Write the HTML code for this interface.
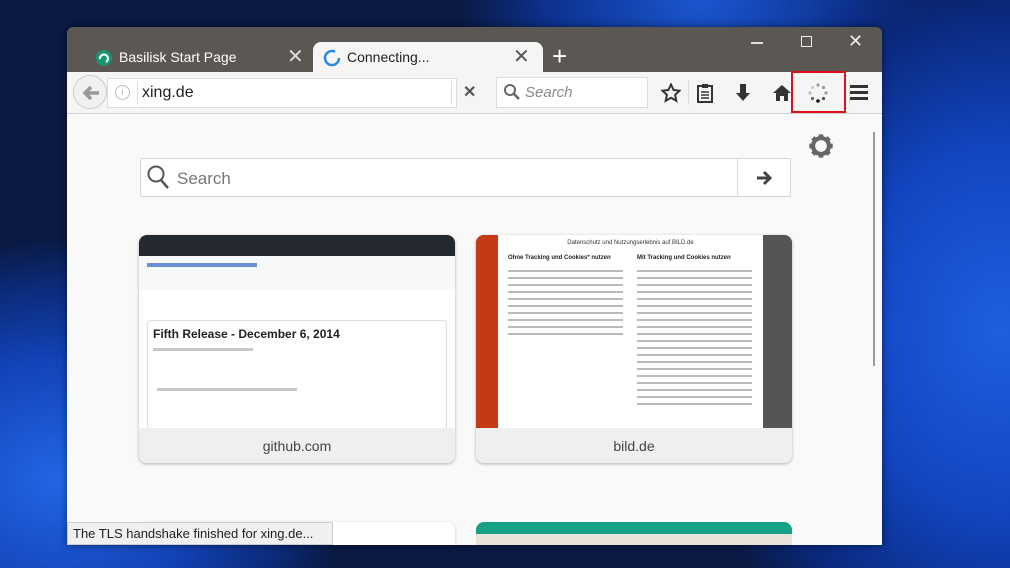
<!DOCTYPE html>
<html><head><meta charset="utf-8"><style>
*{box-sizing:border-box;margin:0;padding:0}
body{width:1010px;height:568px;overflow:hidden;position:relative;font-family:"Liberation Sans",sans-serif;
background:
radial-gradient(ellipse 420px 520px at 1000px 330px,#1d5fe0 0%,#1245c0 35%,#0a2a80 60%,transparent 75%),
radial-gradient(ellipse 360px 300px at 60px 480px,#2266e6 0%,#1343b8 40%,#0b2a78 65%,transparent 80%),
radial-gradient(ellipse 300px 200px at 700px 0px,#1b56d0 0%,#0d3290 50%,transparent 80%),
#0a1a44;}
.win{position:absolute;left:67px;top:27px;width:815px;height:518px;background:#5b5752;border-radius:6px 6px 0 0;overflow:hidden;box-shadow:0 0 8px rgba(0,0,0,.5)}
.tab{position:absolute;top:16px;height:30px;font-size:14px;color:#fff;line-height:28px}
.nav{position:absolute;left:0;top:45px;width:815px;height:42px;background:#f5f5f5;border-bottom:1px solid #d0d0d0}
.content{position:absolute;left:0;top:87px;width:815px;height:431px;background:#f9f9f9}
.tile{position:absolute;width:316px;height:228px;border-radius:8px;background:#ededed;box-shadow:0 1px 3px rgba(0,0,0,.3);overflow:hidden}
.lbl{position:absolute;left:0;bottom:0;width:100%;height:35px;text-align:center;line-height:36px;font-size:14px;color:#444;background:#efefef}
.gl{position:absolute;height:3px;background:#c8c8c8}
</style></head><body>
<div class="win">
  <div class="tab" style="left:28px"><svg width="18" height="18" viewBox="0 0 18 18" style="position:absolute;left:0;top:6px"><circle cx="9" cy="9" r="8" fill="#16956e"/><path d="M5 10a4 4 0 1 1 6 3" stroke="#fff" stroke-width="2.2" fill="none"/></svg><span style="position:absolute;left:24px;white-space:nowrap">Basilisk Start Page</span><span style="position:absolute;left:192px;font-size:20px;color:#ddd">✕</span></div>
  <div style="position:absolute;left:246px;top:15px;width:230px;height:31px;background:#f5f5f5;border-radius:8px 8px 0 0"></div>
  <div class="tab" style="left:256px;color:#222"><svg width="18" height="18" viewBox="0 0 18 18" style="position:absolute;left:0;top:6px"><circle cx="9" cy="9" r="7" stroke="#2b8ae0" stroke-width="2.5" fill="none" stroke-dasharray="36 8"/></svg><span style="position:absolute;left:24px;white-space:nowrap">Connecting...</span><span style="position:absolute;left:190px;font-size:20px;color:#555">✕</span></div>
  <div style="position:absolute;left:485px;top:14px;color:#fff;font-size:26px">+</div>
  <div style="position:absolute;left:684px;top:15px;width:12px;height:2px;background:#ddd"></div>
  <div style="position:absolute;left:734px;top:9px;width:11px;height:11px;border:1.5px solid #eee"></div>
  <div style="position:absolute;left:781px;top:4px;color:#eee;font-size:18px">✕</div>
  <div class="nav">
    <div style="position:absolute;left:40px;top:6px;width:350px;height:30px;background:#fff;border:1px solid #ddd"></div>
    <div style="position:absolute;left:6px;top:3px;width:34px;height:34px;border-radius:50%;border:1px solid #ccc;background:#f1f1f1"></div>
    <svg width="20" height="18" viewBox="0 0 20 18" style="position:absolute;left:14px;top:12px"><path d="M18 9H5M10 3L4 9l6 6" stroke="#999" stroke-width="3.5" fill="none"/></svg>
    <div style="position:absolute;left:48px;top:13px;width:15px;height:15px;border-radius:50%;border:1px solid #bbb;font-size:10px;color:#bbb;text-align:center;line-height:13px">i</div>
    <div style="position:absolute;left:70px;top:9px;width:1px;height:24px;background:#ddd"></div>
    <div style="position:absolute;left:75px;top:12px;font-size:16px;color:#222">xing.de</div>
    <div style="position:absolute;left:384px;top:9px;width:1px;height:24px;background:#ddd"></div>
    <div style="position:absolute;left:396px;top:10px;font-size:16px;color:#555;font-weight:bold">✕</div>
    <div style="position:absolute;left:429px;top:5px;width:152px;height:31px;background:#fff;border:1px solid #ddd"></div>
    <svg width="18" height="18" style="position:absolute;left:436px;top:11px"><circle cx="7" cy="7" r="5" stroke="#666" stroke-width="2" fill="none"/><path d="M11 11l5 5" stroke="#666" stroke-width="2.5"/></svg>
    <div style="position:absolute;left:458px;top:12px;font-size:15px;color:#888;font-style:italic">Search</div>
    <svg width="20" height="20" viewBox="0 0 20 20" style="position:absolute;left:594px;top:11px"><path d="M10 1.5l2.6 5.5 6 .7-4.5 4.1 1.2 6-5.3-3-5.3 3 1.2-6L1.4 7.7l6-.7z" fill="none" stroke="#333" stroke-width="2"/></svg>
    <div style="position:absolute;left:621px;top:9px;width:1px;height:24px;background:#ddd"></div>
    <svg width="18" height="20" viewBox="0 0 18 20" style="position:absolute;left:629px;top:11px"><rect x="2" y="3" width="14" height="16" fill="none" stroke="#333" stroke-width="2"/><rect x="6" y="1" width="6" height="4" fill="#333"/><path d="M5 9h8M5 12h8M5 15h8" stroke="#333" stroke-width="1.5"/></svg>
    <svg width="18" height="20" viewBox="0 0 18 20" style="position:absolute;left:667px;top:11px"><path d="M6 1h6v9h4l-7 8-7-8h4z" fill="#333"/></svg>
    <svg width="18" height="18" viewBox="0 0 18 18" style="position:absolute;left:706px;top:12px"><path d="M9 1L0 9h3v8h4v-5h4v5h4V9h3z" fill="#333"/></svg>
    <div style="position:absolute;left:724px;top:-1px;width:55px;height:42px;border:2.5px solid #e0101a"></div>
    <svg width="22" height="22" viewBox="0 0 22 22" style="position:absolute;left:740px;top:10px"><g fill="#999"><circle cx="11" cy="3" r="1.6"/><circle cx="16.5" cy="5.5" r="1.6"/><circle cx="19" cy="11" r="1.6"/><circle cx="16.5" cy="16.5" r="1.6" fill="#555"/><circle cx="11" cy="19" r="1.8" fill="#111"/><circle cx="5.5" cy="16.5" r="1.6" fill="#666"/><circle cx="3" cy="11" r="1.6" fill="#bbb"/><circle cx="5.5" cy="5.5" r="1.6" fill="#ccc"/></g></svg>
    <div style="position:absolute;left:782px;top:9px;width:1px;height:24px;background:#ddd"></div>
    <div style="position:absolute;left:783px;top:13px;width:18px;height:3px;background:#333;box-shadow:0 6px 0 #333,0 12px 0 #333"></div>
  </div>
  <div class="content">
    <div style="position:absolute;left:806px;top:18px;width:2px;height:234px;background:#999"></div>
    <svg width="28" height="28" viewBox="0 0 30 30" style="position:absolute;left:740px;top:18px"><circle cx="15" cy="15" r="8.5" fill="none" stroke="#666" stroke-width="4.5"/><g stroke="#666" stroke-width="5"><path d="M15 2.5v4M15 23.5v4M2.5 15h4M23.5 15h4M6.2 6.2l2.8 2.8M21 21l2.8 2.8M6.2 23.8l2.8-2.8M21 9l2.8-2.8"/></g></svg>
    <div style="position:absolute;left:73px;top:44px;width:651px;height:39px;background:#fff;border:1px solid #d5d5d5;border-radius:2px"></div>
    <div style="position:absolute;left:670px;top:45px;width:1px;height:37px;background:#ddd"></div>
    <svg width="24" height="26" style="position:absolute;left:80px;top:51px"><circle cx="9" cy="9" r="7.5" stroke="#555" stroke-width="2" fill="none"/><path d="M14 15l7 8" stroke="#555" stroke-width="2.5"/></svg>
    <div style="position:absolute;left:110px;top:55px;font-size:17px;color:#777">Search</div>
    <svg width="20" height="18" viewBox="0 0 20 18" style="position:absolute;left:688px;top:55px"><path d="M2 9h13M9 3l6 6-6 6" stroke="#444" stroke-width="3" fill="none"/></svg>
    <div class="tile" style="left:72px;top:121px">
      <div style="position:absolute;left:0;top:0;width:316px;height:21px;background:#24292f"></div>
      <div style="position:absolute;left:0;top:21px;width:316px;height:172px;background:#fff"></div>
      <div style="position:absolute;left:0;top:21px;width:316px;height:34px;background:#f6f8fa"></div>
      <div style="position:absolute;left:8px;top:28px;width:110px;height:4px;background:#6b8fd4"></div>
      <div style="position:absolute;left:8px;top:85px;width:300px;height:110px;border:1px solid #ddd;border-radius:4px"></div>
      <div style="position:absolute;left:14px;top:92px;font-size:12px;font-weight:bold;color:#222;white-space:nowrap">Fifth Release - December 6, 2014</div>
      <div class="gl" style="left:14px;top:113px;width:100px"></div>
      <div class="gl" style="left:18px;top:153px;width:140px"></div>
      <div class="lbl">github.com</div>
    </div>
    <div class="tile" style="left:409px;top:121px">
      <div style="position:absolute;left:0;top:0;width:316px;height:193px;background:#3a2a20"></div>
      <div style="position:absolute;left:0;top:0;width:22px;height:193px;background:#c43a12"></div>
      <div style="position:absolute;left:22px;top:0;width:265px;height:193px;background:#fff"></div>
      <div style="position:absolute;left:287px;top:0;width:29px;height:193px;background:#555"></div>
      <div style="position:absolute;left:22px;top:5px;width:265px;text-align:center;font-size:6px;color:#333">Datenschutz und Nutzungserlebnis auf BILD.de</div>
      <div style="position:absolute;left:32px;top:20px;font-size:6px;font-weight:bold;color:#222">Ohne Tracking und Cookies* nutzen</div>
      <div style="position:absolute;left:161px;top:20px;font-size:6px;font-weight:bold;color:#222">Mit Tracking und Cookies nutzen</div>
      <div style="position:absolute;left:32px;top:32px;width:115px;height:70px;background:repeating-linear-gradient(#fff 0 3px,#bbb 3px 5px,#fff 5px 7px)"></div>
      <div style="position:absolute;left:161px;top:32px;width:115px;height:140px;background:repeating-linear-gradient(#fff 0 3px,#bbb 3px 5px,#fff 5px 7px)"></div>
      <div class="lbl">bild.de</div>
    </div>
    <div style="position:absolute;left:72px;top:408px;width:316px;height:30px;background:#fff;border-radius:8px 8px 0 0;box-shadow:0 1px 3px rgba(0,0,0,.2)"></div>
    <div style="position:absolute;left:409px;top:408px;width:316px;height:30px;background:#e8e2d8;border-radius:8px 8px 0 0;overflow:hidden"><div style="height:12px;background:#16a086"></div></div>
    <div style="position:absolute;left:0;top:408px;width:266px;height:23px;background:#f0f0f0;border:1px solid #ccc;font-size:13px;color:#222;line-height:21px;padding-left:5px;white-space:nowrap">The TLS handshake finished for xing.de...</div>
  </div>
</div>
</body></html>
